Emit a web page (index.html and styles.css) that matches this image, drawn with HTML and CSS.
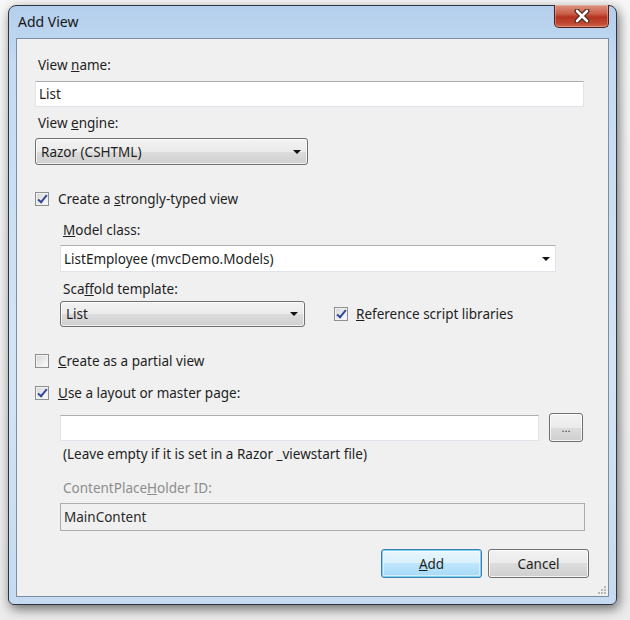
FILE: index.html
```html
<!DOCTYPE html>
<html lang="en">
<head>
    <meta charset="UTF-8">
    <title>Add View</title>
    <link rel="stylesheet" href="styles.css">
</head>
<body>
    <div class="window">
        <div class="titlebar">
            <span class="title">Add View</span>
            <div class="close-btn">
                <svg width="18" height="14" viewBox="0 0 18 14">
                    <path d="M4 2 L14 12 M14 2 L4 12" stroke="#4a2a22" stroke-width="5" stroke-linecap="round"/>
                    <path d="M4 2 L14 12 M14 2 L4 12" stroke="#ffffff" stroke-width="2.6" stroke-linecap="round"/>
                </svg>
            </div>
        </div>
        <div class="client">
            <div class="form">
                <label class="field-label">View <span class="key">n</span>ame:</label>
                <div class="textbox view-name">List</div>

                <label class="field-label gap-s">View <span class="key">e</span>ngine:</label>
                <div class="dropdown engine">
                    <span>Razor (CSHTML)</span>
                    <span class="arrow"></span>
                </div>

                <div class="check-row typed">
                    <span class="check on"></span>
                    <span>Create a <span class="key">s</span>trongly-typed view</span>
                </div>

                <div class="indent">
                    <label class="field-label model">
                        <span class="key">M</span>odel class:
                    </label>
                    <div class="textbox combo">
                        <span>ListEmployee (mvcDemo.Models)</span>
                        <span class="arrow"></span>
                    </div>

                    <label class="field-label scaffold">Sca<span class="key">f</span>fold template:</label>
                    <div class="scaffold-row">
                        <div class="dropdown template">
                            <span>List</span>
                            <span class="arrow"></span>
                        </div>
                        <div class="check-row inline">
                            <span class="check on"></span>
                            <span><span class="key">R</span>eference script libraries</span>
                        </div>
                    </div>
                </div>

                <div class="check-row partial">
                    <span class="check"></span>
                    <span><span class="key">C</span>reate as a partial view</span>
                </div>

                <div class="check-row layout">
                    <span class="check on"></span>
                    <span><span class="key">U</span>se a layout or master page:</span>
                </div>

                <div class="indent">
                    <div class="layout-row">
                        <div class="textbox layout-path"></div>
                        <div class="button browse">...</div>
                    </div>
                    <p class="hint">(Leave empty if it is set in a Razor _viewstart file)</p>

                    <label class="field-label disabled">ContentPlace<span class="key">H</span>older ID:</label>
                    <div class="textbox readonly">MainContent</div>
                </div>

                <div class="actions">
                    <div class="button default"><span class="key">A</span>dd</div>
                    <div class="button">Cancel</div>
                </div>
            </div>
            <svg class="grip" width="10" height="10" viewBox="0 0 10 10">
                <g fill="#b8b8b8">
                    <rect x="8" y="2" width="2" height="2"/>
                    <rect x="5" y="5" width="2" height="2"/>
                    <rect x="8" y="5" width="2" height="2"/>
                    <rect x="2" y="8" width="2" height="2"/>
                    <rect x="5" y="8" width="2" height="2"/>
                    <rect x="8" y="8" width="2" height="2"/>
                </g>
            </svg>
        </div>
    </div>
</body>
</html>
```

FILE: styles.css
```css
* {
    box-sizing: border-box;
}
body {
    margin: 0;
    width: 630px;
    height: 620px;
    background: linear-gradient(#f7f7f7, #ececec);
    font-family: "Noto Sans", "Open Sans", sans-serif;
    font-size: 13.5px;
    color: #1e1e1e;
    overflow: hidden;
}
.window {
    width: 609px;
    height: 600px;
    margin: 5px 0 0 8px;
    padding: 0 7px 7px 7px;
    border: 1px solid #2e3440;
    border-radius: 8px 8px 6px 6px;
    background: linear-gradient(#b4cfec, #c4dbf3 10%, #d3e4f5 60%, #c6dbf1);
    box-shadow: 2px 4px 12px rgba(0, 0, 0, 0.55);
    display: flex;
    flex-direction: column;
}
.titlebar {
    height: 32px;
    display: flex;
    justify-content: space-between;
    align-items: flex-start;
}
.title {
    padding: 6px 0 0 2px;
    font-size: 14px;
    color: #151515;
}
.close-btn {
    width: 55px;
    height: 23px;
    margin-top: -1px;
    border: 1px solid #4b2119;
    border-top: none;
    border-radius: 0 0 5px 5px;
    background: linear-gradient(#dc9585, #c95d47 40%, #b3341f 55%, #c24a33 85%, #d06a54);
    display: flex;
    align-items: center;
    justify-content: center;
    box-shadow: inset 0 0 0 1px rgba(255, 220, 210, 0.35);
}
.client {
    flex: 1;
    border: 1px solid #7d8ea3;
    background: #f0f0f0;
    position: relative;
}
.form {
    padding: 17px 24px 0 18px;
}
.field-label {
    display: block;
    height: 18px;
    line-height: 18px;
    padding-left: 3px;
}
.key {
    text-decoration: underline;
}
.textbox {
    height: 26px;
    margin-top: 7px;
    background: #ffffff;
    border: 1px solid #e2e3ea;
    border-top-color: #abadb3;
    padding-left: 3px;
    line-height: 24px;
    display: flex;
    align-items: center;
    justify-content: space-between;
}
.arrow {
    width: 0;
    height: 0;
    border-left: 4px solid transparent;
    border-right: 4px solid transparent;
    border-top: 4px solid #111;
    margin-right: 6px;
}
.dropdown {
    height: 27px;
    margin-top: 6px;
    border: 1px solid #707070;
    border-radius: 3px;
    background: linear-gradient(#f2f2f2, #ebebeb 50%, #dddddd 50%, #cfcfcf);
    box-shadow: inset 0 0 0 1px rgba(255, 255, 255, 0.7);
    padding-left: 5px;
    display: flex;
    align-items: center;
    justify-content: space-between;
}
.gap-s {
    margin-top: 7px;
}
.engine {
    width: 273px;
}
.check-row {
    height: 18px;
    display: flex;
    align-items: center;
    gap: 9px;
}
.check {
    width: 14px;
    height: 14px;
    border: 1px solid #8e8f8f;
    background: linear-gradient(135deg, #d4d4d4, #f2f2f2 70%, #ffffff);
    box-shadow: inset 0 0 0 1px #f2f2f2;
    position: relative;
}
.check.on::after {
    content: "";
    position: absolute;
    left: 4px;
    top: 0px;
    width: 3px;
    height: 8px;
    border-right: 2px solid #33479a;
    border-bottom: 2px solid #33479a;
    transform: rotate(40deg);
}
.typed {
    margin-top: 25px;
}
.indent {
    padding-left: 25px;
}
.model {
    margin-top: 13px;
}
.combo {
    margin-top: 6px;
    height: 27px;
    margin-right: 28px;
}
.combo .arrow {
    margin-right: 5px;
}
.scaffold {
    margin-top: 8px;
}
.scaffold-row {
    margin-top: 3px;
    display: flex;
    align-items: center;
    gap: 29px;
}
.template {
    width: 245px;
    height: 26px;
    margin-top: 0;
}
.check-row.inline {
    gap: 8px;
}
.partial {
    margin-top: 25px;
}
.layout {
    margin-top: 14px;
}
.layout-row {
    margin-top: 11px;
    display: flex;
    align-items: center;
    gap: 10px;
}
.layout-path {
    flex: 1;
    margin-top: 0;
}
.button {
    height: 29px;
    border: 1px solid #707070;
    border-radius: 3px;
    background: linear-gradient(#f2f2f2, #ebebeb 50%, #dddddd 50%, #cfcfcf);
    box-shadow: inset 0 0 0 1px rgba(255, 255, 255, 0.75);
    display: flex;
    align-items: center;
    justify-content: center;
    width: 101px;
}
.browse {
    width: 34px;
    margin-right: 1px;
    font-size: 11px;
    color: #444;
}
.hint {
    margin: 3px 0 0 3px;
    height: 18px;
    line-height: 18px;
}
.disabled {
    margin-top: 16px;
    color: #8d8d8d;
}
.readonly {
    height: 28px;
    margin-top: 6px;
    margin-right: -1px;
    background: #f0f0f0;
    border: 1px solid #adadad;
    color: #2a2a2a;
}
.actions {
    margin-top: 18px;
    margin-right: -5px;
    display: flex;
    justify-content: flex-end;
    gap: 6px;
}
.button.default {
    border-color: #3c7fb1;
    background: linear-gradient(#eaf6fd, #d9f0fc 50%, #bee6fd 50%, #a7d9f5);
    box-shadow: inset 0 0 0 1px #7ed0f0, inset 0 0 0 2px rgba(255, 255, 255, 0.5);
}
.grip {
    position: absolute;
    right: 2px;
    bottom: 2px;
}
```
